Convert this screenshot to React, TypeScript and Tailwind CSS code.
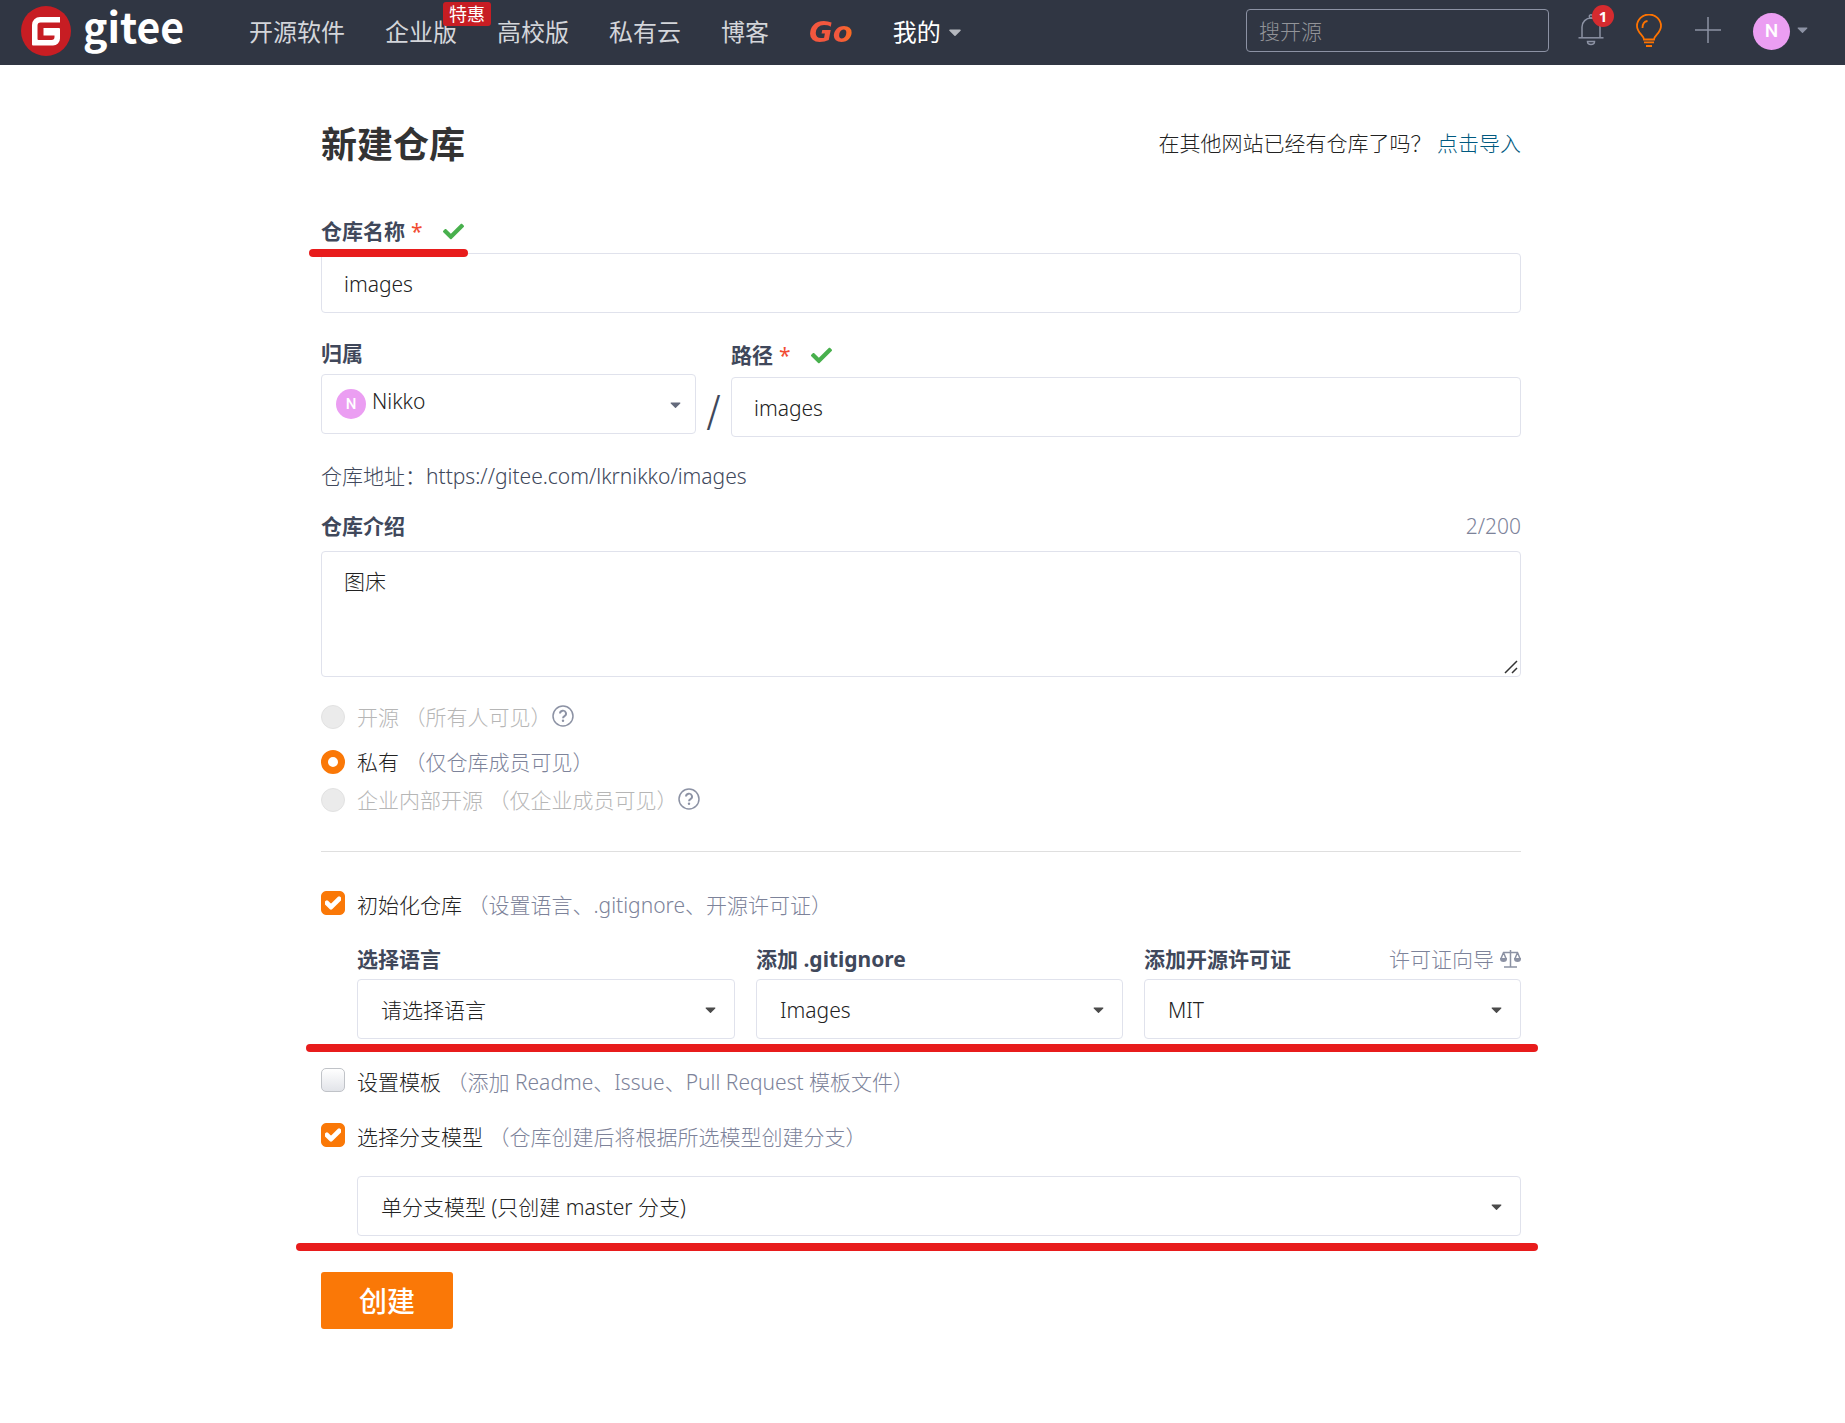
import React, { useState } from "react";
import { FaCaretDown, FaCheck } from "react-icons/fa";
import clsx from "clsx";

const boxClass =
  "block w-full h-[60px] border border-[#e0e2ec] rounded-[4px] bg-white text-[21px] text-[#222222] font-light outline-none focus:border-[#fe7300]";

const navItems = ["开源软件", "企业版", "高校版", "私有云", "博客"];

function GiteeLogo() {
  return (
    <a href="#" aria-label="gitee" className="flex items-center gap-3 text-white">
      <svg width="50" height="50" viewBox="0 0 50 50">
        <circle cx="25" cy="25" r="25" fill="#c71d23" />
        <path
          d="M39 11v5.500H19.500a3 3 0 0 0-3 3V33a1 1 0 0 0 1 1h13a3 3 0 0 0 3-3v-1.500H22.500V22H38a1 1 0 0 1 1 1v9.500a7 7 0 0 1-7 7H12a1 1 0 0 1-1-1V19a8 8 0 0 1 8-8z"
          fill="#fff"
        />
      </svg>
      <span className="w-[99px] h-[50px] leading-[38px] text-[41px] font-bold font-['Noto_Sans_CJK_SC',sans-serif]">
        gitee
      </span>
    </a>
  );
}

function BellIcon() {
  return (
    <svg width="26" height="32" viewBox="0 0 26 32" fill="none" stroke="#8c92a4" strokeWidth="1.500">
      <circle cx="13" cy="2.500" r="1.700" />
      <path d="M4 23.500V13a9 9 0 0 1 18 0v10.500" />
      <path d="M0.500 23.800h25" />
      <path d="M9.500 27.500h7a3.500 3 0 0 1-7 0z" />
    </svg>
  );
}

function BulbIcon() {
  return (
    <svg width="28" height="34" viewBox="0 0 28 34" fill="none" stroke="#fe7300" strokeWidth="1.800">
      <path d="M9 25.500c0-4-7-6.500-7-13.500a12 11.500 0 0 1 24 0c0 7-7 9.500-7 13.500z" />
      <path d="M7.500 14c0-4 1.500-6.500 5-7" />
      <path d="M9 28.300h10M11 32h6" />
    </svg>
  );
}

function HelpIcon() {
  return (
    <svg width="22" height="22" viewBox="0 0 22 22" fill="none" stroke="#8c92a4" strokeWidth="1.500">
      <circle cx="11" cy="11" r="10" />
      <path d="M8 8.600a3 2.900 0 1 1 4.500 2.500c-1 .6-1.500 1-1.500 2.200" strokeWidth="1.900" />
      <circle cx="11" cy="15.800" r="1.200" fill="#8c92a4" stroke="none" />
    </svg>
  );
}

function ScaleIcon() {
  return (
    <svg width="21" height="18" viewBox="0 0 21 18" fill="none" stroke="#8c92a4" strokeWidth="1.500">
      <path d="M10.500 0v17M4 17h13M3 2.500h15" />
      <path d="M3.500 2.500L.8 9M3.500 2.500L6.200 9M17.500 2.500L14.800 9M17.500 2.500L20.200 9" />
      <path d="M0 8h7v1a3.500 3 0 0 1-7 0zM14 8h7v1a3.500 3 0 0 1-7 0z" fill="#8c92a4" stroke="none" />
    </svg>
  );
}

function Avatar({ className }: { className?: string }) {
  return (
    <span
      className={clsx(
        "flex items-center justify-center rounded-full bg-[#eb9ef2] text-white font-medium font-['Roboto',sans-serif]",
        className
      )}
    >
      N
    </span>
  );
}

// red marker stroke drawn over the form
function Underline({ className }: { className: string }) {
  return <div className={clsx("absolute h-2 rounded-full bg-[#e81c1c] pointer-events-none", className)} />;
}

function FieldLabel({ htmlFor, children }: { htmlFor: string; children: React.ReactNode }) {
  return (
    <label htmlFor={htmlFor} className="block leading-[28px] font-bold text-[#40485b] whitespace-nowrap">
      {children}
    </label>
  );
}

function RequiredLabel({ htmlFor, children }: { htmlFor: string; children: React.ReactNode }) {
  return (
    <div className="flex items-center">
      <FieldLabel htmlFor={htmlFor}>{children}</FieldLabel>
      <span className="ml-[6px] leading-[28px] font-normal text-[#f14c33]">*</span>
      <FaCheck className="ml-5 text-[21px] text-[#48b04d]" />
    </div>
  );
}

function Select({ id, options, className }: { id: string; options: string[]; className?: string }) {
  return (
    <div className="relative">
      <select id={id} className={clsx(boxClass, "appearance-none pr-10", className || "pl-[23px] pt-[3px]")}>
        {options.map((option) => (
          <option key={option}>{option}</option>
        ))}
      </select>
      <FaCaretDown
        className={clsx(
          "absolute top-[22px] text-[17px] pointer-events-none",
          id === "owner" ? "right-3 text-[#646a7c]" : "right-4 text-[#4b4b4b]"
        )}
      />
    </div>
  );
}

function RadioRow({ id, checked, disabled, title, hint, help, className }: any) {
  return (
    <div className={clsx("flex items-center h-[30px]", className)}>
      <input
        id={id}
        type="radio"
        name="visibility"
        defaultChecked={checked}
        disabled={disabled}
        className="appearance-none shrink-0 size-6 rounded-full border border-[#c4c7ce] bg-white checked:border-[7px] checked:border-[#fa7807] disabled:bg-[#ebebeb] disabled:border-[#e2e2e2]"
      />
      <label htmlFor={id} className={clsx("ml-3 leading-[30px]", disabled ? "text-[#b6b6b6]" : "text-[#222222]")}>
        {title} <span className={disabled ? "" : "text-[#7d839a]"}>{hint}</span>
      </label>
      {help && (
        <button type="button" aria-label="帮助" className="ml-px -mt-[2px]">
          <HelpIcon />
        </button>
      )}
    </div>
  );
}

function CheckRow({ id, defaultChecked = false, title, hint, className }: any) {
  const [checked, setChecked] = useState(defaultChecked);

  return (
    <div className={clsx("flex items-start h-[30px]", className)}>
      <span className="relative mt-[2px] size-6 shrink-0">
        <input
          id={id}
          type="checkbox"
          checked={checked}
          onChange={(e) => setChecked(e.target.checked)}
          className="block appearance-none size-6 rounded-[5px] border border-[#c0c3c8] bg-linear-to-b from-white to-[#e2e4e9] checked:border-[#fa7807] checked:from-[#fa7807] checked:to-[#fa7807]"
        />
        {checked && (
          <FaCheck className="absolute left-1 top-1 text-[16px] text-white stroke-white stroke-[50px] pointer-events-none" />
        )}
      </span>
      <label htmlFor={id} className="ml-3 leading-[32px] text-[#222222]">
        {title} <span className="text-[#7d839a]">{hint}</span>
      </label>
    </div>
  );
}

function Header() {
  return (
    <header className="flex items-center h-[65px] pl-[21px] pr-[34px] bg-[#303643]">
      <div className="-mt-1">
        <GiteeLogo />
      </div>
      <nav className="flex items-center gap-10 ml-[67px] -mt-[2px] text-[24px] leading-[36px] font-normal text-[#d3d5da] whitespace-nowrap">
        {navItems.map((item) => (
          <a key={item} href="#" className="relative">
            {item}
            {item === "企业版" && (
              <span className="absolute -top-3 left-[58px] w-12 h-6 rounded-[3px] bg-[#c71d23] text-center text-[18px] leading-6 text-white">
                特惠
              </span>
            )}
          </a>
        ))}
        <a
          href="#"
          className="pr-1 bg-linear-to-r from-[#f2573e] from-60% to-[#fe7300] bg-clip-text text-[29px] font-bold italic text-transparent font-['DejaVu_Sans',sans-serif]"
        >
          Go
        </a>
        <a href="#" className="flex items-center gap-1 -ml-1 text-white">
          我的
          <FaCaretDown className="text-[20px] text-[#b4b7be]" />
        </a>
      </nav>
      <div className="flex items-center ml-auto">
        <input
          type="text"
          aria-label="搜开源"
          placeholder="搜开源"
          className="w-[303px] h-[43px] mt-[-4px] px-3 border border-[#8c92a4] rounded-[4px] text-[21px] placeholder:text-[#929499] text-white outline-none"
        />
        <button type="button" aria-label="通知" className="relative ml-[29px] -mt-[6px]">
          <BellIcon />
          <span className="absolute -top-[9px] left-[14px] size-[22px] rounded-full bg-[#d52b2f] text-center text-[15px] leading-[22px] font-bold text-white">
            1
          </span>
        </button>
        <button type="button" aria-label="动态" className="ml-[31px] -mt-1">
          <BulbIcon />
        </button>
        <button type="button" aria-label="新建" className="ml-8 -mt-[6px]">
          <svg width="26" height="26" viewBox="0 0 26 26" stroke="#8c92a4" strokeWidth="1.500">
            <path d="M13 0v26M0 13h26" />
          </svg>
        </button>
        <button type="button" aria-label="用户" className="flex items-center gap-1 ml-8 -mt-[2px]">
          <Avatar className="size-[37px] text-[19px]" />
          <FaCaretDown className="-mt-1 text-[17px] text-[#8c92a4]" />
        </button>
      </div>
    </header>
  );
}

export default function App() {
  const [name, setName] = useState("images");
  const [path, setPath] = useState("images");
  const [desc, setDesc] = useState("图床");

  return (
    <div className="min-h-screen bg-white pb-10 text-[21px] font-light font-['Noto_Sans','Noto_Sans_CJK_SC',sans-serif]">
      <Header />
      <main className="pr-[3px]">
        <form className="w-full max-w-[1200px] mx-auto pt-[53px]" onSubmit={(e) => e.preventDefault()}>
          <div className="flex items-center justify-between h-[54px] text-[#333333]">
            <h1 className="text-[36px] leading-[54px] font-bold">新建仓库</h1>
            <p className="-mt-[2px] text-[#222222]">
              在其他网站已经有仓库了吗？{" "}
              <a href="#" className="text-[#005980]">点击导入</a>
            </p>
          </div>

          <div className="relative mt-[45px]">
            <RequiredLabel htmlFor="name">仓库名称</RequiredLabel>
            <input
              id="name"
              type="text"
              value={name}
              onChange={(e) => setName(e.target.value)}
              className={clsx(boxClass, "mt-2 px-[22px] pt-[2px]")}
            />
            <Underline className="-left-3 top-8 w-[159px]" />
          </div>

          <div className="flex mt-[26px]">
            <div className="w-[375px]">
              <FieldLabel htmlFor="owner">归属</FieldLabel>
              <div className="relative mt-[7px]">
                <Select id="owner" options={["Nikko"]} className="pl-[50px] pb-1" />
                <Avatar className="absolute left-[15px] top-[15px] size-[30px] text-[15px] pointer-events-none" />
              </div>
            </div>
            <span className="w-[35px] pt-[44px] text-center text-[36px] leading-[50px] font-normal text-[#40485b] font-['Noto_Sans_CJK_SC',sans-serif]">
              /
            </span>
            <div className="flex-1 pt-[2px]">
              <RequiredLabel htmlFor="path">路径</RequiredLabel>
              <input
                id="path"
                type="text"
                value={path}
                onChange={(e) => setPath(e.target.value)}
                className={clsx(boxClass, "mt-2 px-[22px] pt-[2px]")}
              />
            </div>
          </div>

          <p className="mt-6 leading-[30px] text-[#40485b]">仓库地址：https://gitee.com/lkrnikko/images</p>

          <div className="flex justify-between mt-[21px] leading-[28px]">
            <FieldLabel htmlFor="desc">仓库介绍</FieldLabel>
            <span className="text-[#7d839a]">2/200</span>
          </div>
          <div className="relative mt-[11px]">
            <textarea
              id="desc"
              value={desc}
              onChange={(e) => setDesc(e.target.value)}
              className="block w-full h-[126px] px-[22px] py-[14px] border border-[#e0e2ec] rounded-[4px] leading-[30px] text-[#222222] outline-none resize-none"
            />
            <svg
              width="14"
              height="14"
              viewBox="0 0 14 14"
              stroke="#333"
              strokeWidth="1.500"
              className="absolute right-[3px] bottom-[3px] pointer-events-none"
            >
              <path d="M1 13L13 1M8 13l5-5" />
            </svg>
          </div>

          <RadioRow id="public" disabled title="开源" hint="（所有人可见）" help className="mt-[25px]" />
          <RadioRow id="private" checked title="私有" hint="（仅仓库成员可见）" className="mt-[15px]" />
          <RadioRow id="internal" disabled title="企业内部开源" hint="（仅企业成员可见）" help className="mt-2" />

          <hr className="mt-9 border-[#dfdfdf]" />

          <CheckRow
            id="init"
            defaultChecked
            title="初始化仓库"
            hint="（设置语言、.gitignore、开源许可证）"
            className="mt-[37px]"
          />
          <div className="relative grid grid-cols-[378fr_367fr_377fr] gap-[21px] mt-[26px] pl-9">
            <div>
              <FieldLabel htmlFor="language">选择语言</FieldLabel>
              <div className="mt-[6px]">
                <Select id="language" options={["请选择语言"]} />
              </div>
            </div>
            <div>
              <FieldLabel htmlFor="gitignore">添加 .gitignore</FieldLabel>
              <div className="mt-[6px]">
                <Select id="gitignore" options={["Images"]} />
              </div>
            </div>
            <div>
              <div className="flex justify-between">
                <FieldLabel htmlFor="license">添加开源许可证</FieldLabel>
                <a href="#" className="flex items-center gap-[6px] leading-[28px] text-[#7d839a]">
                  许可证向导
                  <ScaleIcon />
                </a>
              </div>
              <div className="mt-[6px]">
                <Select id="license" options={["MIT"]} />
              </div>
            </div>
            <Underline className="-left-[15px] -right-[17px] top-[99px]" />
          </div>

          <CheckRow
            id="template"
            title="设置模板"
            hint="（添加 Readme、Issue、Pull Request 模板文件）"
            className="mt-[27px]"
          />
          <CheckRow
            id="branch"
            defaultChecked
            title="选择分支模型"
            hint="（仓库创建后将根据所选模型创建分支）"
            className="mt-[25px]"
          />
          <div className="relative mt-[25px] pl-9">
            <Select id="model" options={["单分支模型 (只创建 master 分支)"]} />
            <Underline className="-left-[25px] -right-[17px] top-[67px]" />
          </div>

          <button type="submit" className="mt-9 w-[132px] h-[57px] rounded-[3px] bg-[#fa7807] text-[28px] font-medium text-white">
            创建
          </button>
        </form>
      </main>
    </div>
  );
}
